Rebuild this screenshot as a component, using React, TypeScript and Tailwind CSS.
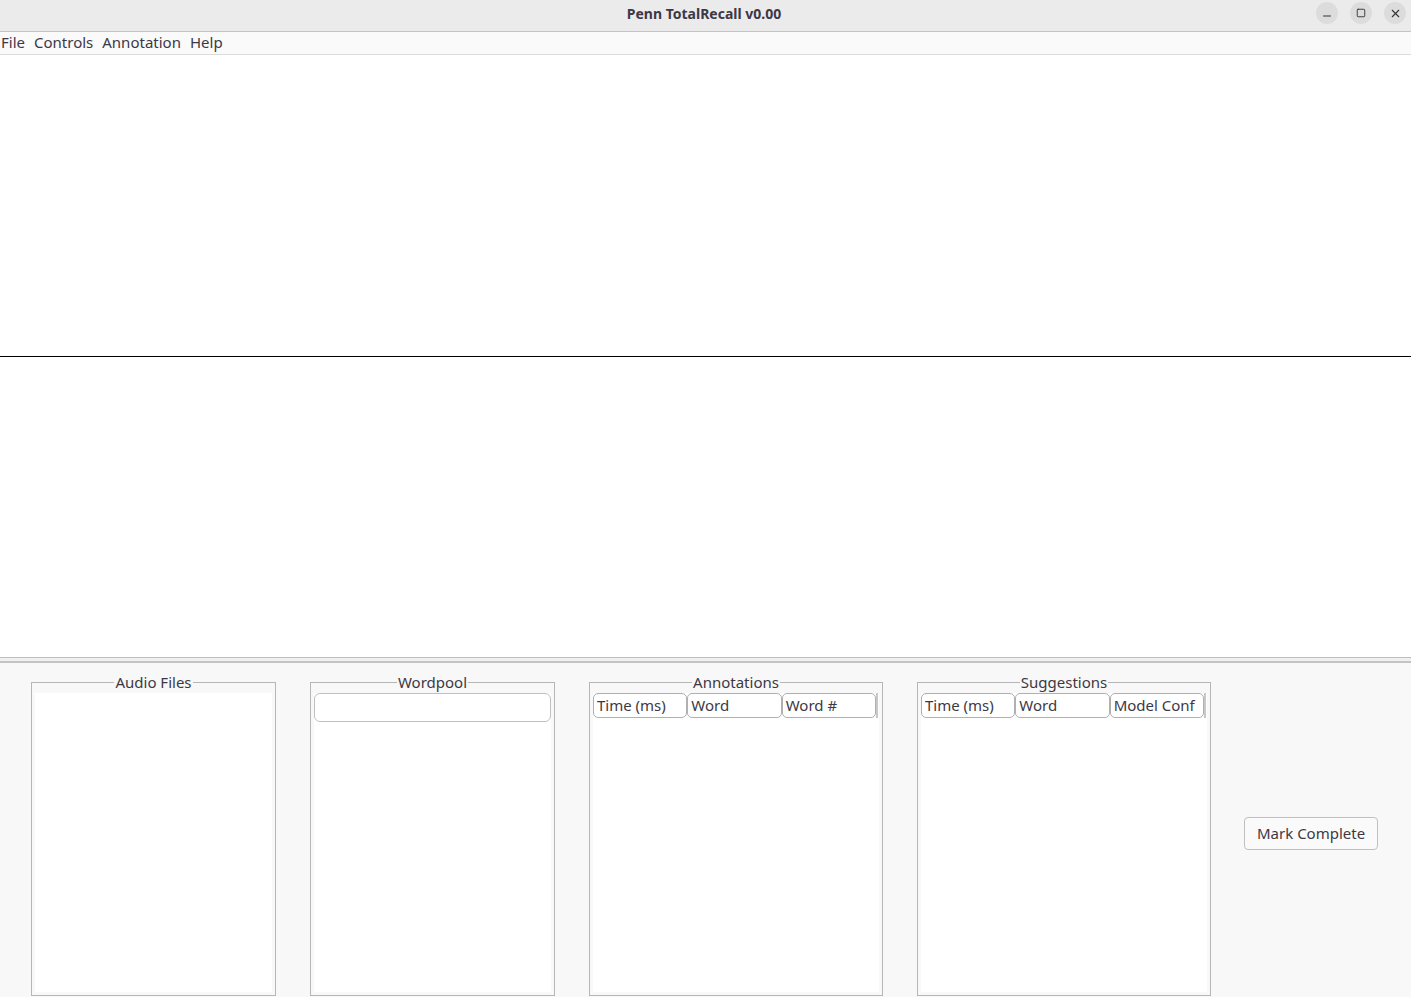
import { Minus, Square, X } from "lucide-react"

const font = { fontFamily: '"Noto Sans", "Open Sans", sans-serif' }

const Panel = ({ title, width, children }: { title: string; width: string; children?: React.ReactNode }) => {
  return (
    <fieldset className={`${width} h-[323px] border border-[#b6b6b6] px-[3px] pb-[3px] flex flex-col min-w-0`}>
      <legend className="mx-auto px-[1px] text-[15px] leading-[18px] text-[#3d3846]">{title}</legend>
      <div className="flex-1 bg-white flex flex-col mt-[2px]">{children}</div>
    </fieldset>
  )
}

const HeaderRow = ({ cols }: { cols: string[] }) => {
  return (
    <div className="flex h-[25px] border-r-2 border-[#c8c8c8] mr-[1px]">
      {cols.map((c) => (
        <div key={c} className="flex-1 border border-[#b0b0b0] rounded-[5px] bg-white px-[3px] text-[15px] leading-[22px] text-[#3d3846] whitespace-nowrap overflow-hidden">
          {c}
        </div>
      ))}
    </div>
  )
}

export default function App() {
  return (
    <div style={font} className="w-[1411px] h-[997px] flex flex-col bg-white overflow-hidden">
      {/* title bar */}
      <div className="h-[32px] shrink-0 bg-[#ebebeb] border-b border-[#c4c4c4] relative flex items-center justify-center">
        <span className="text-[14px] font-bold text-[#3d3846] -mt-[5px] -ml-[3px]">Penn TotalRecall v0.00</span>
        <div className="absolute right-[5px] top-[2px] flex gap-[12px]">
          <div className="w-[22px] h-[22px] rounded-full bg-[#dcdcdc] flex items-center justify-center">
            <Minus size={12} strokeWidth={2} className="text-[#333] mt-[5px]" />
          </div>
          <div className="w-[22px] h-[22px] rounded-full bg-[#dcdcdc] flex items-center justify-center">
            <Square size={10} strokeWidth={2.2} className="text-[#333]" />
          </div>
          <div className="w-[22px] h-[22px] rounded-full bg-[#dcdcdc] flex items-center justify-center">
            <X size={13} strokeWidth={2} className="text-[#333]" />
          </div>
        </div>
      </div>

      {/* menu bar */}
      <div className="h-[23px] shrink-0 bg-[#fafafa] border-b border-[#dcdcdc] flex items-center pl-[1px] pb-[2px] gap-[9px] text-[15px] text-[#3d3846]">
        <span>File</span>
        <span>Controls</span>
        <span>Annotation</span>
        <span>Help</span>
      </div>

      {/* waveform area */}
      <div className="h-[301px] shrink-0 bg-white" />
      <div className="h-[1px] shrink-0 bg-black" />
      <div className="h-[300px] shrink-0 bg-white" />

      {/* split divider */}
      <div className="h-[6px] shrink-0 border-t border-[#bdbdbd] bg-[#f0f0f0] flex flex-col justify-end">
        <div className="h-[2px] bg-[#c4c4c4]" />
      </div>

      {/* bottom panel */}
      <div className="flex-1 bg-[#f8f8f8] flex items-start pl-[31px] pt-[10px]">
        <Panel title="Audio Files" width="w-[245px]" />
        <div className="w-[34px]" />
        <Panel title="Wordpool" width="w-[245px]">
          <div className="h-[29px] border border-[#c0c0c0] rounded-[6px] bg-white" />
        </Panel>
        <div className="w-[34px]" />
        <Panel title="Annotations" width="w-[294px]">
          <HeaderRow cols={["Time (ms)", "Word", "Word #"]} />
        </Panel>
        <div className="w-[34px]" />
        <Panel title="Suggestions" width="w-[294px]">
          <HeaderRow cols={["Time (ms)", "Word", "Model Conf"]} />
        </Panel>
        <div className="self-stretch flex items-center pl-[33px]">
          <button className="h-[33px] px-[12px] border border-[#c0c0c0] rounded-[4px] bg-[#fafafa] text-[15px] text-[#3d3846] -mt-[4px]">
            Mark Complete
          </button>
        </div>
      </div>
    </div>
  )
}
